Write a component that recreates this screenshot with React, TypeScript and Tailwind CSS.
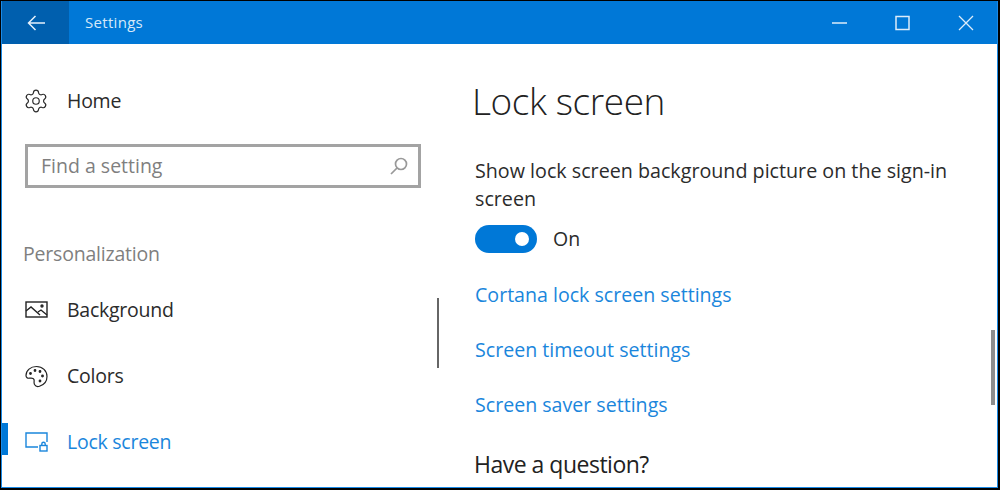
import { Settings } from "lucide-react";

const font = "font-['Open_Sans','Noto_Sans',sans-serif]";

function NavItem({ label, icon, active }: { label: string; icon: React.ReactNode; active?: boolean }) {
  return (
    <div className={`flex h-[66px] items-center pl-[23px] ${active ? "text-[#1a86dc]" : "text-[#2b2b2b]"}`}>
      <span className="flex w-[42px] shrink-0 items-center">{icon}</span>
      <span className="text-[19.5px] tracking-[-0.25px]">{label}</span>
    </div>
  );
}

export default function App() {
  return (
    <div className={`${font} h-[490px] w-[1000px] overflow-hidden bg-black pt-[1px] pr-[2px] pb-[2px] pl-[1px]`}>
      <div className="flex h-full flex-col border-x border-b border-[#1b8ae6] bg-white">
        {/* Title bar */}
        <div className="flex h-[43px] shrink-0 items-center bg-[#0078d7] text-white">
          <div className="flex h-full w-[67px] items-center justify-center bg-[#005fae]">
            <svg width="18" height="16" viewBox="0 0 18 16" fill="none" stroke="#e6f1fb" strokeWidth="1.5">
              <path d="M18 8H1.5M8.5 1L1.5 8l7 7" />
            </svg>
          </div>
          <span className="ml-[16px] text-[15px] tracking-[0.3px] text-[#d6e9f9]">Settings</span>
          <div className="ml-auto flex items-center">
            <svg width="15" height="16" viewBox="0 0 15 16" className="mr-[48px]" stroke="#dcecfa" strokeWidth="1.5">
              <path d="M0 8h15" />
            </svg>
            <svg width="15" height="16" viewBox="0 0 15 16" className="mr-[48px]" fill="none" stroke="#dcecfa" strokeWidth="1.5">
              <rect x="1" y="1.500" width="13" height="13" />
            </svg>
            <svg width="16" height="16" viewBox="0 0 16 16" className="mr-[23px]" stroke="#dcecfa" strokeWidth="1.3">
              <path d="M1 1l14 14M15 1L1 15" />
            </svg>
          </div>
        </div>

        <div className="relative flex min-h-0 flex-1">
          {/* Sidebar */}
          <aside className="relative w-[438px] shrink-0">
            <div className="mt-[24px]">
              <NavItem label="Home" icon={<Settings size={26} strokeWidth={1.1} className="-ml-[2px]" />} />
            </div>
            <div className="mt-[10px] ml-[23px] flex h-[44px] w-[396px] items-center justify-between border-[3px] border-[#a3a3a3] pr-[9px] pl-[13px]">
              <span className="text-[19.5px] tracking-[0px] text-[#7f7f7f]">Find a setting</span>
              <svg width="20" height="20" viewBox="0 0 20 20" fill="none" stroke="#999" strokeWidth="1.7">
                <circle cx="12" cy="8" r="5.500" />
                <path d="M8 12l-6 6" />
              </svg>
            </div>
            <div className="mt-[52px] pl-[21px] text-[19.5px] tracking-[-0.2px] leading-[28px] text-[#7f7f7f]">Personalization</div>
            <div className="mt-[9px]">
              <NavItem
                label="Background"
                icon={
                  <svg width="23" height="20" viewBox="0 0 23 20" fill="none" stroke="#222" strokeWidth="1.4">
                    <rect x="1" y="2" width="21" height="15" />
                    <path d="M1 11l5-4 9 8M13 12l3-2 6 5" />
                    <circle cx="17" cy="6" r="1" />
                  </svg>
                }
              />
              <NavItem
                label="Colors"
                icon={
                  <svg width="23" height="23" viewBox="0 0 23 23" fill="none" stroke="#222" strokeWidth="1.2">
                    <path d="M11.500 1.500c-6 0-10.500 4-10.500 9 0 2 1.500 3 3.500 2.700 2.500-.4 4-.2 4.500 1.300.5 1.800-.5 3 .5 5 1 1.800 3 2.500 5 1.800 4.500-1.500 7.500-5.300 7.500-9.800 0-5.500-4.500-10-10.500-10z" />
                    <circle cx="5.500" cy="8.500" r="0.800" fill="#222" />
                    <circle cx="10" cy="5.500" r="0.800" fill="#222" />
                    <circle cx="15" cy="6.500" r="0.800" fill="#222" />
                    <circle cx="17.500" cy="11" r="0.800" fill="#222" />
                    <circle cx="15" cy="16" r="0.800" fill="#222" />
                  </svg>
                }
              />
              <NavItem
                active
                label="Lock screen"
                icon={
                  <svg width="23" height="20" viewBox="0 0 23 20" fill="none" stroke="#1a86dc" strokeWidth="1.4">
                    <path d="M13 15H1V1h21v9" />
                    <rect x="15" y="13.500" width="7" height="5.500" />
                    <path d="M16.800 13.500v-1.500a1.700 1.700 0 0 1 3.400 0v1.500" />
                  </svg>
                }
              />
            </div>
            <div className="absolute top-[379px] left-0 h-[32px] w-[6px] bg-[#0078d7]" />
            <div className="absolute top-[254px] left-[435px] h-[70px] w-[2px] bg-[#666]" />
          </aside>

          {/* Content */}
          <main className="min-w-0 flex-1 pl-[32px]">
            <h1 className="mt-[33px] text-[37px] leading-[48px] font-light tracking-[-0.4px] text-[#222]">Lock screen</h1>
            <p className="mt-[32px] ml-[3px] w-[500px] text-[19.7px] leading-[28px] tracking-[0px] text-[#2b2b2b]">
              Show lock screen background picture on the sign-in screen
            </p>
            <div className="mt-[11px] ml-[3px] flex items-center">
              <div className="flex h-[28px] w-[62px] items-center justify-end rounded-full bg-[#0078d7] pr-[8px]">
                <div className="h-[14px] w-[14px] rounded-full bg-white" />
              </div>
              <span className="ml-[16px] text-[19.5px] tracking-[0px] text-[#2b2b2b]">On</span>
            </div>
            <div className="mt-[28px] ml-[3px] flex flex-col gap-[27px] text-[19.6px] leading-[28px] tracking-[0px] text-[#1a86dc]">
              <span>Cortana lock screen settings</span>
              <span>Screen timeout settings</span>
              <span>Screen saver settings</span>
            </div>
            <h2 className="mt-[27px] ml-[2px] text-[23px] leading-[36px] tracking-[-0.5px] text-[#222]">Have a question?</h2>
          </main>
          <div className="absolute top-[286px] right-[2px] h-[75px] w-[4px] bg-[#8d8d8d]" />
        </div>
      </div>
    </div>
  );
}
